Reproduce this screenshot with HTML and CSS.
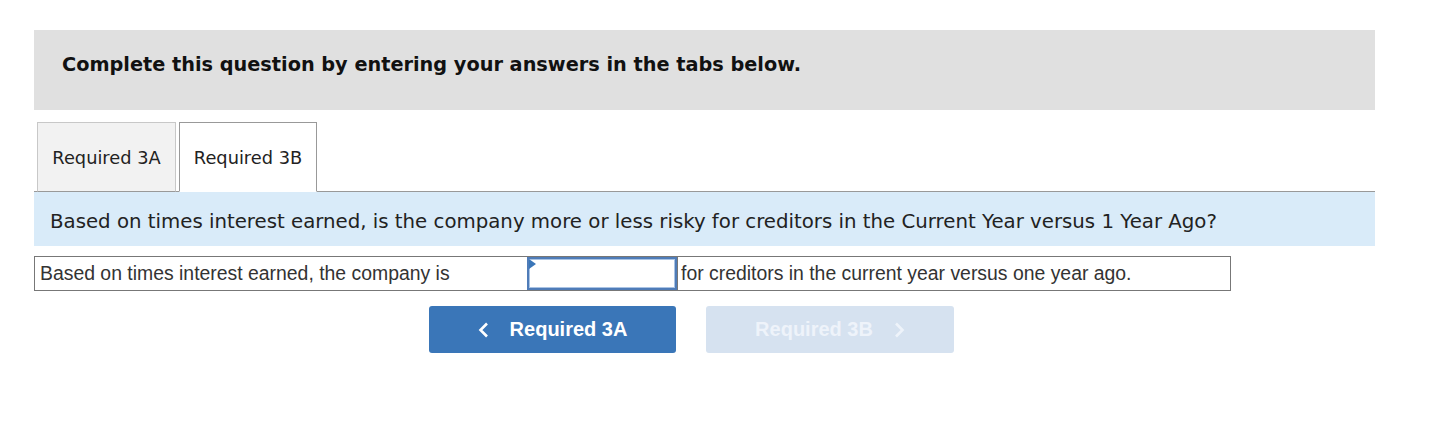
FILE: index.html
```html
<!DOCTYPE html>
<html lang="en">
<head>
    <meta charset="UTF-8">
    <title>Required 3B</title>
    <link rel="stylesheet" href="styles.css">
</head>
<body>
    <div class="question-container">
        <!-- Instructions -->
        <div class="instructions">Complete this question by entering your answers in the tabs below.</div>

        <!-- Tabs -->
        <div class="tab-bar">
            <a href="#" class="tab">Required 3A</a>
            <a href="#" class="tab active">Required 3B</a>
        </div>

        <div class="prompt">Based on times interest earned, is the company more or less risky for creditors in the Current Year versus 1 Year Ago?</div>

        <div class="answer-row">
            <div class="answer-cell">Based on times interest earned, the company is</div>
            <div class="answer-input">
                <span class="input-marker"></span>
            </div>
            <div class="answer-cell answer-end">for creditors in the current year versus one year ago.</div>
        </div>

        <div class="nav-buttons">
            <button class="nav-btn prev">
                <svg viewBox="0 0 11 16"><path d="M9 1.5L2.5 8 9 14.5"/></svg>
                Required 3A
            </button>
            <button class="nav-btn next" disabled>
                Required 3B
                <svg viewBox="0 0 11 16"><path d="M2 1.5L8.5 8 2 14.5"/></svg>
            </button>
        </div>
    </div>
</body>
</html>
```
FILE: styles.css
```css
* {
    margin: 0;
    padding: 0;
    box-sizing: border-box;
}

body {
    font-family: "DejaVu Sans", Verdana, sans-serif;
    background: white;
    color: #111;
}

.question-container {
    width: 1341px;
    margin: 30px 0 0 34px;
}

/* Instructions */
.instructions {
    background: #e0e0e0;
    height: 80px;
    padding: 23px 28px 0;
    font-size: 19.3px;
    font-weight: 700;
}

/* Tabs */
.tab-bar {
    display: flex;
    gap: 3px;
    margin-top: 12px;
    padding-left: 3px;
    border-bottom: 1px solid #999;
}

.tab {
    display: flex;
    align-items: center;
    justify-content: center;
    width: 139px;
    height: 70px;
    margin-bottom: -1px;
    font-size: 17.8px;
    color: #222;
    text-decoration: none;
    background: #f2f2f2;
    border: 1px solid #c8c8c8;
    border-bottom: 1px solid #999;
}

.tab.active {
    width: 138px;
    background: white;
    border: 1px solid #999;
    border-bottom: 1px solid white;
}

.prompt {
    display: flex;
    align-items: center;
    background: #d9ebf9;
    height: 54px;
    padding: 4px 16px 0;
    font-size: 19.75px;
    color: #222;
}

/* Answer row */
.answer-row {
    display: flex;
    width: 1197px;
    height: 35px;
    margin-top: 10px;
    border: 1px solid #777;
    font-family: "Liberation Sans", Arial, sans-serif;
    font-size: 19.4px;
    color: #333;
}

.answer-cell {
    display: flex;
    align-items: center;
    width: 492px;
    padding-left: 5px;
}

.answer-end {
    flex: 1;
    width: auto;
    border-left: 1px solid #777;
    padding-left: 3px;
}

.answer-input {
    position: relative;
    width: 150px;
    border: 2px solid #4f7cb8;
    box-shadow: inset 0 0 0 1px #a9c3e4;
    background: white;
}

.input-marker {
    position: absolute;
    top: 0;
    left: 0;
    width: 0;
    height: 0;
    border-top: 5px solid transparent;
    border-bottom: 5px solid transparent;
    border-left: 7px solid #3a76b8;
}

/* Buttons */
.nav-buttons {
    display: flex;
    gap: 30px;
    margin: 15px 0 0 395px;
}

.nav-btn {
    display: flex;
    align-items: center;
    justify-content: center;
    gap: 21px;
    width: 247px;
    height: 47px;
    border: none;
    border-radius: 3px;
    font-family: "Liberation Sans", Arial, sans-serif;
    font-size: 20px;
    font-weight: 700;
    color: white;
    cursor: pointer;
}

.nav-btn svg {
    width: 11px;
    height: 16px;
    fill: none;
    stroke: currentColor;
    stroke-width: 2.6;
}

.nav-btn.prev {
    background: #3a76b8;
}

.nav-btn.next {
    width: 248px;
    background: #d6e2f0;
    color: #eef3fa;
    cursor: default;
}
```
